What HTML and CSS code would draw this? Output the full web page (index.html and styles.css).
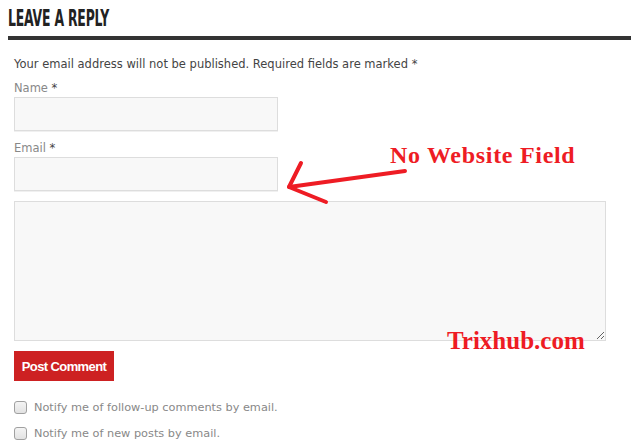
FILE: index.html
```html
<!DOCTYPE html>
<html>
<head>
<meta charset="utf-8">
<link rel="stylesheet" href="styles.css">
</head>
<body>
<div class="page">
  <h3 class="reply-title"><span class="title-text">LEAVE A REPLY</span></h3>
  <form class="comment-form">
    <p class="notes">Your email address will not be published. Required fields are marked <span class="req">*</span></p>
    <label class="field-label">Name <span class="req">*</span></label>
    <input class="text-input" type="text">
    <label class="field-label label-email">Email <span class="req">*</span></label>
    <input class="text-input" type="text">
    <textarea class="comment-box"></textarea>
    <button class="submit" type="button">Post Comment</button>
    <div class="notify-list">
      <label class="notify"><span class="box"></span>Notify me of follow-up comments by email.</label>
      <label class="notify"><span class="box"></span>Notify me of new posts by email.</label>
    </div>
  </form>

  <div class="note note-website">No Website Field</div>
  <div class="note note-site">Trixhub.com</div>
  <svg class="arrow" width="631" height="444" viewBox="0 0 631 444">
    <g fill="none" stroke="#ee1c24" stroke-width="4" stroke-linecap="round" stroke-linejoin="round">
      <path d="M405 171 L289 187"/>
      <path d="M301 163 L289 187 L326 202"/>
    </g>
  </svg>
</div>
</body>
</html>
```

FILE: styles.css
```css
html, body {
  margin: 0;
  padding: 0;
  background: #fff;
}
.page {
  position: relative;
  width: 631px;
  height: 444px;
  overflow: hidden;
}
.reply-title {
  margin: 0 0 0 8px;
  padding: 0;
  height: 36px;
  border-bottom: 4px solid #333;
  font-family: "DejaVu Sans Condensed", "DejaVu Sans", sans-serif;
  font-weight: bold;
  font-size: 23px;
  line-height: 36px;
  color: #222;
}
.title-text {
  display: inline-block;
  transform: scaleX(0.6);
  transform-origin: 0 0;
  letter-spacing: -0.3px;
}
.comment-form {
  display: flex;
  flex-direction: column;
  align-items: flex-start;
  padding-left: 14px;
  font-family: "DejaVu Sans", Verdana, sans-serif;
  font-size: 11.5px;
}
.notes {
  margin: 16px 0 0 0;
  line-height: 16px;
  color: #444;
}
.req {
  color: #444;
}
.field-label {
  margin-top: 8px;
  line-height: 16px;
  color: #888;
}
.label-email {
  margin-top: 9px;
}
.text-input {
  box-sizing: border-box;
  width: 264px;
  height: 34px;
  margin: 1px 0 0 0;
  border: 1px solid #ddd;
  background: #f8f8f8;
  box-shadow: 0 1px 0 #f0f0f0;
  padding: 0;
}
.comment-box {
  box-sizing: border-box;
  width: 592px;
  height: 140px;
  margin: 10px 0 0 0;
  border: 1px solid #ddd;
  background: #f8f8f8;
  padding: 0;
}
.submit {
  margin-top: 10px;
  width: 100px;
  height: 30px;
  border: 0;
  background: #cd2122;
  color: #fff;
  font-family: "Liberation Sans", Arial, sans-serif;
  font-weight: bold;
  font-size: 13px;
  letter-spacing: -0.6px;
  padding: 0;
}
.notify-list {
  display: flex;
  flex-direction: column;
  gap: 13px;
  margin-top: 20px;
  font-size: 11.3px;
}
.notify {
  display: flex;
  align-items: center;
  gap: 7px;
  line-height: 13px;
  color: #888;
}
.box {
  box-sizing: border-box;
  width: 13px;
  height: 13px;
  border: 1px solid #a0a0a0;
  border-radius: 3px;
  background: linear-gradient(#f4f4f4, #e2e2e2);
}
.note {
  position: absolute;
  font-family: "Liberation Serif", "Times New Roman", serif;
  font-weight: bold;
  color: #ee1c24;
  line-height: 1;
  white-space: nowrap;
}
.note-website {
  left: 390px;
  top: 143px;
  font-size: 24px;
  letter-spacing: 0.7px;
}
.note-site {
  left: 447px;
  top: 328px;
  font-size: 25px;
}
.arrow {
  position: absolute;
  left: 0;
  top: 0;
  pointer-events: none;
}
```
